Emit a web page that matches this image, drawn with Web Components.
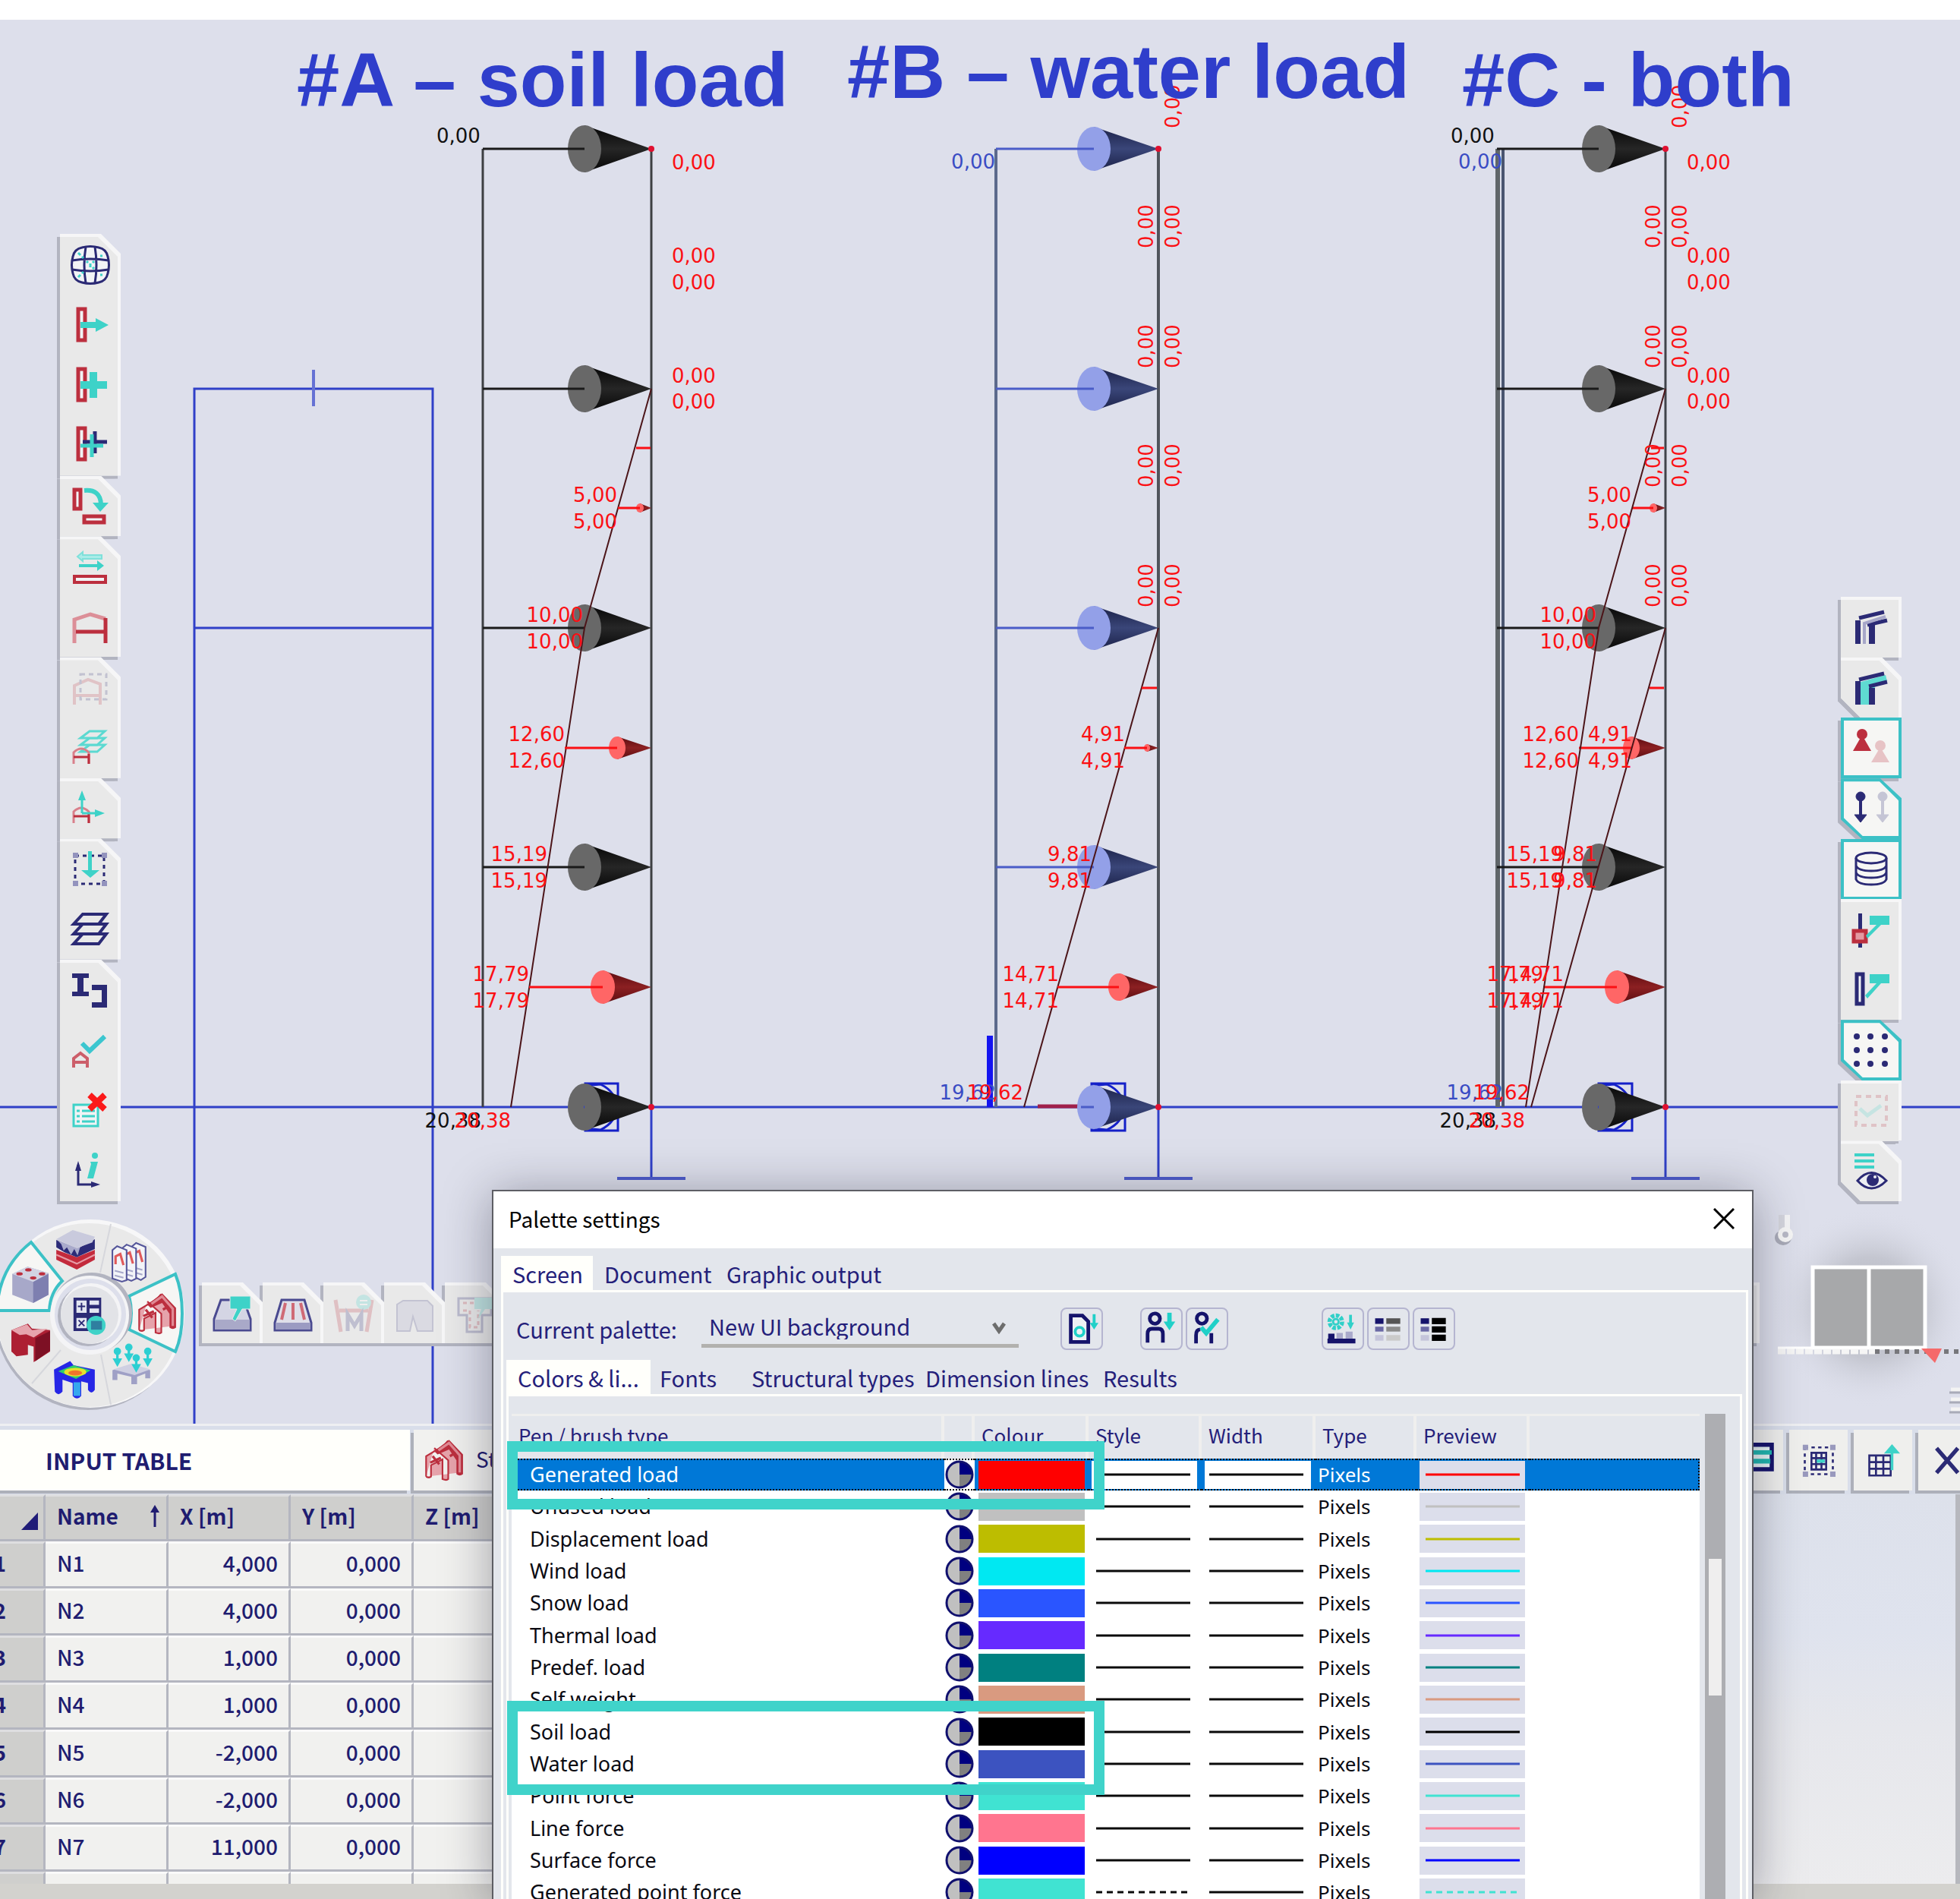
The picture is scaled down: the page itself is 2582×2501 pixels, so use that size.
<!DOCTYPE html>
<html lang="en">
<head>
<meta charset="utf-8">
<title>Palette settings</title>
<style>
html,body{margin:0;padding:0;height:100%;overflow:hidden}
body{font-family:"Noto Sans CJK SC","Open Sans",sans-serif;color:#201c70}
</style>
</head>
<body>
<app-shell></app-shell>
<script>
const N='#2b2a75',T='#3ed2c8',R='#bc2f3e';
const frameHouse=`<path d="M4 47V22L26 9 30 4 46 20V42M4 47q4 2 6 0V33l14-7v24q5 2 7 0V27L14 12" fill="#e6a3ab" stroke="${R}" stroke-width="2"/><path d="M14 16 32 2 49 20V44q-4 3-8 0V27L32 14 18 20Z" fill="${R}"/><path d="M19 15 32 6 45 21V42" fill="none" stroke="#e08a94" stroke-width="3"/><path d="M9 30 22 24M12 22l8 10M33 22l7-4" stroke="${R}" stroke-width="3"/>`;
const miniA=(x,y,c=R)=>`<path d="M${x} ${y+20}V${y+5}q10-10 20 0V${y+20}" fill="none" stroke="#d9808b" stroke-width="3"/><path d="M${x} ${y+11}h20m0-4v13" fill="none" stroke="${c}" stroke-width="3"/>`;
const sheets=(x,y,w,c,sw,dy)=>[0,1,2].map(i=>`<path d="M${x+12} ${y+i*dy}H${x+w}L${x+w-10} ${y+i*dy+dy}H${x}Z" fill="#e9e9e9" stroke="${c}" stroke-width="${sw}"/>`).reverse().join('');
const ICONS={
globe:`<path d="M14 2Q25-1 36 2 46 4 48 14 51 25 48 36 46 46 36 48 25 51 14 48 4 46 2 36-1 25 2 14 4 4 14 2Z" fill="#f2f3f6" stroke="${N}" stroke-width="3"/><path d="M19 1Q15 25 19 49M31 1Q35 25 31 49M1 19Q25 15 49 19M1 31Q25 35 49 31" fill="none" stroke="${N}" stroke-width="3"/><path d="M25 23v5M9 9l3 3m2 2 2 2M38 13h3M38 38h3M9 41l3-3m2-2 2-2M20 20l2 2m6 6 2 2m0-10-2 2" stroke="${T}" stroke-width="3"/>`,
move:`<path d="M9 4H18V45H9Z" fill="#f1f3f5" stroke="${R}" stroke-width="5"/><path d="M12 21H32V16L49 25 32 34V29H12Z" fill="${T}"/>`,
plus:`<path d="M9 4H18V45H9Z" fill="#f1f3f5" stroke="${R}" stroke-width="5"/><path d="M12 20H24V8H34V20H47V30H34V42H24V30H12Z" fill="${T}"/>`,
copy:`<path d="M9 4H18V45H9Z" fill="#f1f3f5" stroke="${R}" stroke-width="5"/><path d="M31 8V37M15 22H47" stroke="${N}" stroke-width="5"/><path d="M27 12V42M12 27H42" stroke="${T}" stroke-width="5"/>`,
rotate:`<path d="M4 3H12V28H4ZM17 38H43V46H17Z" fill="#f1f3f5" stroke="${R}" stroke-width="5"/><path d="M17 4Q38 2 39 22" fill="none" stroke="${T}" stroke-width="6"/><path d="M28 20H49L38 32Z" fill="${T}"/>`,
mirror:`<path d="M4 37H45V45H4Z" fill="#f1f3f5" stroke="${R}" stroke-width="4"/><path d="M8 11 15 5V9H40V14H15V17Z" fill="#a9ece8" stroke="#7fe0da" stroke-width="2"/><path d="M10 21H34V16L43 23 34 30V25H10Z" fill="${T}"/>`,
frame:`<path d="M4 47V16L25 9 45 15" fill="none" stroke="#dc8f98" stroke-width="5"/><path d="M6 32H45M45 14V47" fill="none" stroke="${R}" stroke-width="5"/>`,
frameSel:`<g opacity=".2"><path d="M4 47V22L22 14 38 20V47M6 35H38" fill="none" stroke="${R}" stroke-width="4"/><path d="M12 7H46V40H12Z" fill="none" stroke="${N}" stroke-width="3" stroke-dasharray="6 5"/></g>`,
planeA:sheets(12,4,32,'#5cd9d1',3,9)+miniA(3,27),
axisA:miniA(3,24)+`<path d="M14 31V12M14 31H34" stroke="${T}" stroke-width="3"/><path d="M14 1 9 14H19ZM44 31 31 26V36Z" fill="${T}"/>`,
dropSel:`<path d="M5 7H43V44H5Z" fill="none" stroke="${N}" stroke-width="3" stroke-dasharray="5 5"/><path d="M2 3h7v7H2ZM40 3h7v7h-7ZM2 40h7v7H2ZM40 40h7v7h-7Z" fill="#9393bd"/><path d="M22 1H27V26H37L25 36 13 26H22Z" fill="${T}"/>`,
layers:sheets(3,6,43,N,4,13),
ibeam:`<path d="M1 2H23V8H16V26H23V32H1V26H8V8H1Z" fill="${N}"/><path d="M27 17H47V47H27V40H40V24H27Z" fill="${N}"/>`,
checkA:`<path d="M3 48V36L12 29 21 36V48M3 41H21" fill="none" stroke="#cc5e6a" stroke-width="4"/><path d="M14 16 24 26 44 7" fill="none" stroke="#3cc6cf" stroke-width="6"/>`,
listX:`<path d="M3 18H35V46H3Z" fill="#f1f3f5" stroke="${T}" stroke-width="3"/><path d="M7 26h4m3 0h17M7 33h4m3 0h17M7 40h4m3 0h17" stroke="${T}" stroke-width="3"/><path d="M24 5 44 24M44 5 24 24" stroke="#fb1a1a" stroke-width="8"/>`,
axisI:`<path d="M9 18V44H32" fill="none" stroke="${N}" stroke-width="3"/><path d="M9 13 5 26H13ZM38 44 26 40V48Z" fill="${N}"/><path d="M25 14H35L29 36H21L26 17Z" fill="${T}"/><circle cx="31" cy="6" r="4" fill="${T}"/>`,
beams:`<path d="M4 47V16H11V47M22 47V20H30V47" fill="${N}"/><path d="M9 13 42 5M20 22 46 16" stroke="${N}" stroke-width="5"/><path d="M16 47V20L44 11" fill="none" stroke="#a7a7c9" stroke-width="4"/>`,
beamsFill:`<path d="M8 47V18L44 8 46 16 30 22V47" fill="#5fdad2"/><path d="M4 47V16H11V47M22 47V25H30V47" fill="${N}"/><path d="M9 14 42 6M22 23 46 17" stroke="${N}" stroke-width="5"/>`,
pawns:`<circle cx="13" cy="7" r="7" fill="${R}"/><path d="M13 8 25 29H1Z" fill="${R}"/><g opacity=".25"><circle cx="37" cy="22" r="7" fill="${R}"/><path d="M37 24 49 44H25Z" fill="${R}"/></g>`,
loads:`<g fill="${N}" stroke="${N}"><circle cx="11" cy="9" r="6"/><path d="M11 9V34" stroke-width="4"/><path d="M3 33H19L11 43Z"/></g><g fill="${N}" stroke="${N}" opacity=".24"><circle cx="40" cy="9" r="6"/><path d="M40 9V34" stroke-width="4"/><path d="M32 33H48L40 43Z"/></g>`,
stack:`<ellipse cx="25" cy="10" rx="20" ry="7" fill="#f7f7f5" stroke="${N}" stroke-width="3"/><path d="M5 10V38Q8 45 25 45T45 38V10M5 20Q8 27 25 27T45 20M5 29Q8 36 25 36T45 29" fill="none" stroke="${N}" stroke-width="3"/>`,
nodeTag:`<path d="M8 3h5v45H8Z" fill="${N}"/><path d="M2 26H18V40H2Z" fill="#e39aa2" stroke="${R}" stroke-width="5"/><path d="M23 6H49V18H38L20 36 18 32 32 18H23Z" fill="${T}"/>`,
barTag:`<path d="M6 6H14V45H6Z" fill="#f1f3f5" stroke="${N}" stroke-width="5"/><path d="M23 6H49V18H38L20 38 17 34 32 18H23Z" fill="${T}"/>`,
dots:[7,25,43].map(y=>[6,24,43].map(x=>`<circle cx="${x}" cy="${y}" r="4" fill="${N}"/>`).join('')).join(''),
checkBox:`<g opacity=".2"><path d="M5 6H45V44H5Z" fill="none" stroke="${R}" stroke-width="4" stroke-dasharray="7 6"/><path d="M10 22 20 31 38 18" fill="none" stroke="${T}" stroke-width="5"/></g>`,
eye:`<path d="M3 4H29M3 12H29M3 20H29" stroke="${T}" stroke-width="4"/><path d="M7 38Q25 17 45 38 25 58 7 38Z" fill="#eceef2" stroke="${N}" stroke-width="3"/><circle cx="27" cy="37" r="8" fill="${N}"/><circle cx="30" cy="33" r="2" fill="#eceef2"/>`,
slabTag:`<path d="M10 8H40L49 33V48H1V33Z" fill="#d4d5e4" stroke="#4a4a90" stroke-width="3"/><path d="M2 34H48V47H2Z" fill="#a9a9c8"/><path d="M22 3H49V20H38L29 36 25 33 31 20H22Z" fill="${T}" stroke="#e9e9e9"/>`,
slabLines:`<path d="M10 8H40L49 38V48H1V38Z" fill="#dfdfe9" stroke="#4a4a90" stroke-width="3"/><path d="M2 38H48V47H2Z" fill="#9b9bc2"/><path d="M15 12 10 34M25 12V34M35 12 40 34" stroke="#cf6a76" stroke-width="4"/>`,
mass:`<g opacity=".22"><path d="M1 8 8 50M49 8 42 50M6 22H44" fill="none" stroke="${R}" stroke-width="5"/><circle cx="38" cy="11" r="10" fill="${T}"/><path d="M33 9h10m-10 5h10" stroke="#fff" stroke-width="2"/><path d="M17 49V27L26 42 35 27V49" fill="none" stroke="${N}" stroke-width="5"/></g>`,
blockCut:`<path d="M2 14 10 9H42L49 16V49H29L23 30 19 49H2Z" fill="#dadae2" stroke="#c3c3d2" stroke-width="2"/>`,
colTag:`<g opacity=".24"><path d="M3 6H46V28H34V50H14V28H3Z" fill="none" stroke="${N}" stroke-width="3"/><path d="M9 12H40M9 22H18V44H29V22" fill="none" stroke="${R}" stroke-width="3" stroke-dasharray="5 4"/><path d="M24 5H50V20H38L28 34 33 20H24Z" fill="${T}"/></g>`,
house:frameHouse,
calc:`<path d="M4 2H42V30H30V48H4Z" fill="${N}"/><path d="M8 6H22V23H8ZM26 6H39V12H26ZM26 17H39V23H26ZM8 30H22V44H8Z" fill="#e3e6f2"/><path d="M15 9v11M10 14h10M11 33l8 8m0-8-8 8" stroke="${N}" stroke-width="2"/><circle cx="35" cy="40" r="13" fill="${T}"/><path d="M28 34H43V46H28Z" fill="#2f7fa0"/>`,
found:`<path d="M2 25V37L27 49 49 37V25L27 34Z" fill="#c32a3c"/><path d="M2 31 27 42 49 31" fill="none" stroke="#e79aa5" stroke-width="2"/><path d="M2 13V22L12 28 27 34 49 24V12L27 24Z" fill="#2c2b78"/><path d="M2 12 22 1 49 9 46 16 27 23Z" fill="#c9cadd"/><path d="M3 13 27 23 31 22 28 32 24 24 20 31 15 22 11 26 8 18Z" fill="#a9aacb"/>`,
docs:[26,14,2].map((x,i)=>`<path d="M${x} ${6+i*2}L${x+6} ${1+i*2} ${x+18} ${6+i*2}V${44+i*2}L${x+12} ${48+i}L${x} ${42+i*2}Z" fill="#f3f4f8" stroke="#55569a" stroke-width="2"/><path d="M${x+4} ${24+i*2}v-10l6-3 4 14" fill="none" stroke="#e05a5a" stroke-width="3"/><path d="M${x+3} ${32+i*2}l11 3m-11 3 11 3" stroke="#a7a8c9" stroke-width="2"/>`).join(''),
tableLoad:`<path d="M2 32 22 26 48 32V42H42V36L32 40V49H25V40L8 36V44H2Z" fill="#9fa0c6"/><path d="M3 31 25 24 48 31 29 38Z" fill="#cfd0e2"/><g fill="#2ccfd2" stroke="#2ccfd2"><path d="M8 6V20M22 1V14M31 15V27M45 6V20" stroke-width="3"/><circle cx="8" cy="9" r="4"/><circle cx="22" cy="4" r="4"/><circle cx="31" cy="17" r="4"/><circle cx="45" cy="9" r="4"/><path d="M3 18H13L8 27ZM17 12H27L22 21ZM26 25H36L31 34ZM40 18H50L45 27Z"/></g>`,
result:`<path d="M1 14 20 4 24 9 49 14V38Q45 44 41 38V30L33 28V45Q28 51 23 45V30L11 26V40Q6 46 2 40Z" fill="#2626e6"/><path d="M24 29h8V45H24Z" fill="#35a8ee"/><path d="M6 16 24 9 44 15 27 25Z" fill="#2fd06a"/><ellipse cx="26" cy="17" rx="13" ry="5" fill="#e8e02c"/><ellipse cx="26" cy="18" rx="8" ry="3" fill="#f0742c"/>`,
steel:`<path d="M2 12 10 14V41L2 36Z" fill="#8d1527"/><path d="M2 10 22 2 27 8 49 10V36L29 49V30L22 28V40L8 42 2 36Z" fill="#ad1f33"/><path d="M2 10 21 3 27 10 46 8 29 19 20 15 12 16Z" fill="#e6a4ad"/><path d="M31 20 49 11V35L31 48Z" fill="#7d1024"/>`,
cube:`<path d="M3 12 22 3 48 11V38L29 48 3 38Z" fill="#a7a8c9"/><path d="M3 12 22 3 48 11 29 22Z" fill="#d2d3e3"/><path d="M29 22 48 12V38L29 48Z" fill="#7e7fb0"/><g fill="${R}"><ellipse cx="23" cy="7" rx="4" ry="2"/><ellipse cx="12" cy="12" rx="4" ry="2"/><ellipse cx="40" cy="12" rx="4" ry="2"/><ellipse cx="29" cy="17" rx="4" ry="2"/></g>`,
doc:`<path d="M10 7H26L34 15V43H10Z" fill="#eef0f4" stroke="#15136b" stroke-width="5"/><circle cx="22" cy="29" r="6" fill="none" stroke="#20d0c8" stroke-width="4"/><path d="M42 5V20" stroke="#20d0c8" stroke-width="4"/><path d="M36 17H48L42 26Z" fill="#20d0c8"/>`,
userDown:`<circle cx="16" cy="11" r="7" fill="none" stroke="#15136b" stroke-width="5"/><path d="M6 44V32Q6 25 12 25H21Q27 25 27 32V44" fill="none" stroke="#15136b" stroke-width="5"/><path d="M36 3V18" stroke="#20d0c8" stroke-width="6"/><path d="M28 15H44L36 27Z" fill="#20d0c8"/>`,
userCheck:`<circle cx="18" cy="11" r="7" fill="none" stroke="#15136b" stroke-width="5"/><path d="M10 45V34Q10 26 16 26M31 45V31" fill="none" stroke="#15136b" stroke-width="5"/><path d="M17 23 24 31 40 12" fill="none" stroke="#20d0c8" stroke-width="6"/>`,
gearBars:`<circle cx="15" cy="15" r="9" fill="none" stroke="#30d0c8" stroke-width="6" stroke-dasharray="5 2"/><circle cx="15" cy="15" r="4" fill="none" stroke="#30d0c8" stroke-width="3"/><path d="M36 5V18" stroke="#30d0c8" stroke-width="4"/><path d="M31 16H41L36 26Z" fill="#30d0c8"/><path d="M4 32H13V40H4Z" fill="#15136b"/><path d="M16 31h9v9h-9ZM29 29h10v11H29Z" fill="#a9a9cb"/><path d="M3 39H43V46H3Z" fill="#15136b"/>`,
listGray:`<path d="M6 10H18V18H6Z" fill="#15136b"/><path d="M6 22H18V29H6Z" fill="#6a69a5"/><path d="M6 34H18V42H6Z" fill="#c4c4da"/><path d="M22 10H42V18H22Z" fill="#555"/><path d="M22 22H42V29H22Z" fill="#8b8b8b"/><path d="M22 34H42V42H22Z" fill="#cacaca"/>`,
listBlack:`<path d="M6 10H18V18H6Z" fill="#15136b"/><path d="M6 22H18V29H6Z" fill="#6a69a5"/><path d="M6 34H18V42H6Z" fill="#c4c4da"/><path d="M22 14H42M22 26H42M22 38H42" stroke="#000" stroke-width="9"/>`,
monitor:`<path d="M20 3H50V38H20Z" fill="#e8f5f5" stroke="#15136b" stroke-width="6"/><path d="M20 11H50V17H20ZM20 23H48V30H20Z" fill="#20b8b0"/>`,
gridSel:`<path d="M4 6H46V46H4Z" fill="none" stroke="${N}" stroke-width="3" stroke-dasharray="5 5"/><path d="M1 2h8v8H1ZM42 2h8v8h-8ZM1 42h8v8H1ZM42 42h8v8h-8Z" fill="#9999bd"/><path d="M14 14H36V39H14ZM21 14V39M29 14V39M14 22H36M14 31H36" fill="none" stroke="${N}" stroke-width="3"/><path d="M22 24h12v5H22Z" fill="${T}"/>`,
gridUp:`<path d="M4 18H36V48H4ZM14 18V48M25 18V48M4 28H36M4 38H36" fill="none" stroke="${N}" stroke-width="3"/><path d="M38 40V14" stroke="${T}" stroke-width="4"/><path d="M26 15H50L38 1Z" fill="${T}"/>`,
cross:`<path d="M8 7 40 44M40 7 8 44" stroke="${N}" stroke-width="6"/>`
};
const icon=(n,s=50)=>`<svg width="${s}" height="${s}" viewBox="0 0 50 50" aria-hidden="true">${ICONS[n]}</svg>`;
function define(name,render){
  customElements.define(name,class extends HTMLElement{
    constructor(){super();this.attachShadow({mode:'open'});}
    connectedCallback(){this.shadowRoot.innerHTML=render(this);}
  });
}

/* Structural model: columns, load cones, value labels */
function modelMarkup(){
  const o=[];
  const ln=(x1,y1,x2,y2,c,w=3)=>o.push(`<path d="M${x1} ${y1}L${x2} ${y2}" stroke="${c}" stroke-width="${w}"/>`);
  const tx=(s,x,y,c,end)=>o.push(`<text x="${x}" y="${y}" fill="${c}"${end?' text-anchor="end"':''}>${s}</text>`);
  const up=(x,y)=>o.push(`<text transform="translate(${x} ${y}) rotate(-90)" fill="${RED}">0,00</text>`);
  const cone=(x0,b,t,y,rx,ry,kind,lc)=>{
    o.push(`<path d="M${b} ${y-ry}L${t} ${y}L${b} ${y+ry}Z" fill="url(#${kind}Body)"/><ellipse cx="${b}" cy="${y}" rx="${rx}" ry="${ry}" fill="${{soil:'#686868',water:'#93a0e8',gen:'#ff6666'}[kind]}"/>`);
    ln(x0,y,b,y,lc);
  };
  const RED='#fb1014',BL='#3a4cc4',DK='#4c1519',BLUE='#3040c8';
  const Y=[196,512,827,1142,1458];
  ln(0,1458,2582,1458,BLUE,3);
  o.push(`<path d="M256 1875V512H570V1875M256 827H570" fill="none" stroke="${BLUE}" stroke-width="3"/>`);
  ln(413,487,413,535,'#6672d4',4);
  const support=(x)=>{ln(x,1458,x,1551,BLUE,3);ln(x-45,1552,x+45,1552,'#4e5ccc',4);};
  const ring=(x,w)=>o.push(`<rect x="${x}" y="1427" width="${w}" height="62" fill="none" stroke="#1420c8" stroke-width="3"/><path d="M${x} 1430L${x+20} 1428Q${x+w-2} 1438 ${x+w-2} 1458Q${x+w-2} 1478 ${x+20} 1488L${x} 1486" fill="none" stroke="#1420c8" stroke-width="3"/>`);
  /* soil */
  ln(636,196,636,1458,'#3d3f42',3);ln(858,196,858,1458,'#3d3f42',3);support(858);
  Y.slice(0,4).forEach(y=>cone(636,770,858,y,22,31,'soil','#1a1a1a'));
  ring(771,43);cone(769,770,858,1458,22,31,'soil','#3040c8');
  o.push(`<path d="M858 512L770 827L673 1458" fill="none" stroke="${DK}" stroke-width="2"/>`);
  ln(838,590,857,590,RED);
  cone(814,843,858,669,5,6,'gen',RED);cone(744,813,858,985,11,15,'gen',RED);cone(697,794,858,1300,16,22,'gen',RED);
  tx('0,00',575,188,'#111');
  [223,346,381,504,538].forEach(y=>tx('0,00',885,y,RED));
  const pairs=(s,x,y)=>{tx(s,x,y,RED,1);tx(s,x,y+35,RED,1);};
  pairs('5,00',813,661);pairs('10,00',768,819);pairs('12,60',744,976);pairs('15,19',721,1134);pairs('17,79',697,1292);
  tx('20,38',634,1485,'#111',1);tx('20,38',673,1485,RED,1);
  /* water */
  ln(1312,196,1312,1458,'#5c6a8c',4);ln(1526,196,1526,1458,'#50545c',4);support(1526);
  ln(1367,1457,1424,1457,'#a0204a',5);
  Y.slice(0,4).forEach(y=>cone(1312,1441,1526,y,22,29,'water','#4a5cc8'));
  ring(1438,44);cone(1424,1441,1526,1458,22,29,'water','#4a5cc8');
  o.push(`<path d="M1526 827L1349 1458" fill="none" stroke="${DK}" stroke-width="2"/>`);
  ln(1504,906,1524,906,RED);cone(1481,1511,1526,985,4,5,'gen',RED);cone(1393,1474,1526,1300,14,18,'gen',RED);
  ln(1304,1364,1304,1458,'#1414f0',8);
  tx('0,00',1311,222,BL,1);
  up(1554,169);[327,485,642,800].forEach(y=>{up(1519,y);up(1554,y);});
  pairs('4,91',1482,976);pairs('9,81',1438,1134);pairs('14,71',1395,1292);
  tx('19,62',1312,1448,BL,1);tx('19,62',1348,1448,RED,1);
  /* both */
  ln(1973,196,1973,1458,'#60666a',6);ln(1980,196,1980,1458,'#4a5570',4);ln(2194,196,2194,1458,'#3f434a',3);support(2194);
  Y.slice(0,4).forEach(y=>cone(1972,2106,2194,y,22,31,'soil','#1a1a1a'));
  ring(2106,44);cone(2105,2106,2194,1458,22,31,'soil','#3040c8');
  ln(2175,590,2192,590,RED);ln(2173,906,2192,906,RED);
  cone(2150,2178,2194,669,5,6,'gen',RED);cone(2080,2149,2194,985,11,15,'gen',RED);cone(2033,2130,2194,1300,16,22,'gen',RED);
  o.push(`<path d="M2194 512L2106 827L2010 1458M2194 827L2017 1458" fill="none" stroke="${DK}" stroke-width="2"/>`);
  tx('0,00',1911,188,'#111');tx('0,00',1979,222,BL,1);
  [223,346,381,504,538].forEach(y=>tx('0,00',2222,y,RED));
  up(2222,169);[327,485,642,800].forEach(y=>{up(2187,y);up(2222,y);});
  pairs('5,00',2149,661);pairs('10,00',2103,819);pairs('12,60',2080,976);pairs('4,91',2150,976);pairs('15,19',2059,1134);pairs('9,81',2104,1134);pairs('17,79',2033,1292);pairs('14,71',2060,1292);
  tx('19,62',1980,1448,BL,1);tx('19,62',2015,1448,RED,1);tx('20,38',1971,1485,'#111',1);tx('20,38',2009,1485,RED,1);
  [[858,196],[1526,196],[2194,196],[858,1458],[1526,1458],[2194,1458]].forEach(p=>o.push(`<circle cx="${p[0]}" cy="${p[1]}" r="4" fill="#e01030"/>`));
  return o.join('');
}
const grad=(id,a,b)=>`<linearGradient id="${id}Body" x1="0" y1="0" x2="0" y2="1"><stop offset="0" stop-color="${a}"/><stop offset=".5" stop-color="${b}"/><stop offset="1" stop-color="${a}"/></linearGradient>`;
define('model-canvas',()=>`<style>
:host{display:block;height:100%;background:#dddfeb}
svg{display:block;width:100%;height:100%}
text{font:26px "DejaVu Sans",sans-serif}
.cap text{font:bold 101px "Liberation Sans",Arial,sans-serif;fill:#2f3ecb}
</style><svg viewBox="0 26 2582 1849" preserveAspectRatio="xMidYMin slice" role="img" aria-label="Load model">
<defs>${grad('soil','#050505','#262626')}${grad('water','#1b2148','#3a4679')}${grad('gen','#5a0c10','#8c2022')}</defs>
${modelMarkup()}
<g class="cap"><text x="391" y="140">#A – soil load</text><text x="1116" y="129">#B – water load</text><text x="1926" y="140">#C - both</text></g></svg>`);

/* Floating tool strips */
define('tool-button',el=>`<style>
:host{display:flex;flex:1 1 80px;min-width:0;min-height:0}
button{flex:1;display:flex;align-items:center;justify-content:center;border:0;padding:0;background:none;margin:0}
svg{display:block;flex:none;overflow:visible}
.active{background:#3cc1c6}
.active span{flex:1;align-self:stretch;margin:4px;background:#f6f6f4;display:flex;align-items:center;justify-content:center}
.hex{clip-path:polygon(0 0,52px 0,100% 26px,100% 100%,28px 100%,0 54px)}
.hex span{clip-path:polygon(0 0,47px 0,100% 25px,100% 100%,25px 100%,0 48px)}
</style><button aria-label="${el.getAttribute('icon')||'tool'}" class="${el.hasAttribute('active')?'active':''} ${el.hasAttribute('hex')?'hex':''}"><span>${el.getAttribute('icon')?icon(el.getAttribute('icon')):''}</span></button>`);
define('tool-group',()=>`<style>
:host{display:flex;flex-direction:inherit;position:relative;background:#f6f6f7;
 clip-path:polygon(0 0,calc(100% - 26px) 0,100% 26px,100% 100%,0 100%)}
:host([plain]){clip-path:none}
div{display:flex;flex-direction:inherit;flex:1;background:#e9e9e9;margin:4px 4px 0 0;
 clip-path:polygon(0 0,calc(100% - 26px) 0,100% 26px,100% 100%,0 100%)}
:host([plain]) div{clip-path:none}
:host([bare]){background:none;clip-path:none}
:host([bare]) div{background:none;margin:0;clip-path:none}
:host([low]){clip-path:polygon(0 0,calc(100% - 26px) 0,100% 26px,100% 100%,26px 100%,0 calc(100% - 26px))}
::slotted(tool-button){margin:-4px 0 0 4px}
:host([bare]) ::slotted(tool-button){margin:0}
</style><div><slot></slot></div>`);
const group=(list,attrs='')=>`<tool-group ${attrs} style="flex:${list.length} 1 0">${list.map(b=>`<tool-button icon="${b}"></tool-button>`).join('')}</tool-group>`;
define('tool-strip',el=>{
  const k=el.getAttribute('kind');
  const body=k==='left'
   ?group(['globe','move','plus','copy'])+group(['rotate'])+group(['mirror','frame'])+group(['frameSel','planeA'])+group(['axisA'])+group(['dropSel','layers'])+group(['ibeam','checkA','listX','axisI'])
   :k==='right'
   ?group(['beams'],'plain')+group(['beamsFill'],'low')+`<tool-group bare style="flex:3 1 0"><tool-button icon="pawns" active></tool-button><tool-button icon="loads" active hex></tool-button><tool-button icon="stack" active></tool-button></tool-group>`+group(['nodeTag','barTag'],'plain')+`<tool-group bare style="flex:1 1 0"><tool-button icon="dots" active hex></tool-button></tool-group>`+group(['checkBox'],'plain')+group(['eye'],'low')
   :['slabTag','slabLines','mass','blockCut','colTag'].map(i=>`<tool-group style="flex:0 0 80px"><tool-button icon="${i}"></tool-button></tool-group>`).join('')+`<tool-group plain style="flex:1"></tool-group>`;
  return `<style>:host{display:flex;flex-direction:${k==='bottom'?'row':'column'};filter:drop-shadow(-4px 4px 0 #b2b4c0)}tool-group{min-height:0}</style>${body}`;
});

define('mode-wheel',()=>{
  const put=(n,x,y,s)=>`<svg x="${x}" y="${y}" width="${s}" height="${s}" viewBox="0 0 50 50">${ICONS[n]}</svg>`;
  return `<style>:host{display:block}svg{display:block;overflow:visible}</style>
<svg width="250" height="262" viewBox="0 1600 250 262" role="img" aria-label="Mode wheel">
<circle cx="116" cy="1734" r="123" fill="#b2b4c0"/><circle cx="119" cy="1730" r="124" fill="#f7f7f8"/><circle cx="117" cy="1732" r="121" fill="#e9e9e9"/>
<path d="M146 1612 132 1676M146 1850 133 1784M80 1778 42 1822" stroke="#d6d7dc" stroke-width="2"/>
<path d="M170 1707 231 1678Q240 1700 240 1730T231 1780L170 1751Q176 1730 170 1707Z" fill="#f6f6f4" stroke="#3cc1c6" stroke-width="4"/>
<path d="M-4 1726Q-2 1670 41 1636L82 1687Q66 1702 65 1726Z" fill="#f6f6f4" stroke="#3cc1c6" stroke-width="4"/>
<circle cx="121" cy="1729" r="53" fill="#b2b4c0"/><circle cx="118" cy="1732" r="52" fill="#f4f4f6"/><circle cx="119" cy="1731" r="47" fill="#dddfeb"/><circle cx="116" cy="1733" r="40" fill="#b2b4c0"/><circle cx="120" cy="1730" r="40" fill="#f4f4f6"/><circle cx="118" cy="1732" r="38" fill="#e2e3e7"/>
${put('calc',93,1707,48)}${put('found',72,1619,54)}${put('docs',146,1636,52)}${put('house',179,1701,54)}${put('tableLoad',146,1770,54)}${put('result',70,1788,56)}${put('steel',13,1741,54)}${put('cube',13,1665,53)}
</svg>`;});

define('nav-cube',()=>`<style>:host{display:block}svg{display:block}</style>
<svg width="272" height="310" viewBox="2310 1565 272 310" role="img" aria-label="View cube">
<defs><radialGradient id="h"><stop offset="0" stop-color="#b4b5bd"/><stop offset=".5" stop-color="#c4c6d0"/><stop offset="1" stop-color="#dddfeb" stop-opacity="0"/></radialGradient></defs>
<ellipse cx="2464" cy="1722" rx="132" ry="132" fill="url(#h)"/>
<ellipse cx="2349" cy="1630" rx="11" ry="10" fill="#a9abb8"/><path d="M2343 1600H2358V1624H2343Z" fill="#d4d5dd"/><path d="M2351 1600H2358V1624H2351Z" fill="#f4f4f6"/><circle cx="2352" cy="1626" r="7" fill="#b9bac6" stroke="#f6f6f6" stroke-width="6"/>
<path d="M2388 1669H2536V1775H2388ZM2462 1669V1775" fill="#a7a8aa" stroke="#fff" stroke-width="5"/>
<path d="M2342 1779H2470" stroke="#f5f5f5" stroke-width="9" stroke-dasharray="10 2"/><path d="M2470 1780H2582" stroke="#77777b" stroke-width="6" stroke-dasharray="6 7"/>
<path d="M2342 1775H2530" stroke="#fff" stroke-width="3"/><path d="M2531 1776H2558L2549 1795Z" fill="#f56a6a"/>
<path d="M2570 1830H2582M2570 1843H2582M2570 1856H2582" stroke="#f3f3f3" stroke-width="5"/><path d="M2568 1834H2582M2568 1847H2582M2568 1860H2582" stroke="#a9abb8" stroke-width="3"/></svg>`);

/* Node input table */
define('node-grid',()=>{
  const rows=[['1','N1','4,000'],['2','N2','4,000'],['3','N3','1,000'],['4','N4','1,000'],['5','N5','-2,000'],['6','N6','-2,000'],['7','N7','11,000'],['','','']];
  return `<style>
:host{display:block;overflow:hidden;background:#cfcfcd}
table{border-collapse:separate;border-spacing:0;table-layout:fixed;width:765px;margin-left:-60px;font-size:28px;line-height:36px}
th,td{box-sizing:border-box;height:62px;padding:0 0 6px;border-right:3px solid #b4b6c0;border-bottom:3px solid #b4b6c0;border-top:3px solid #fafafa;overflow:hidden;white-space:nowrap}
thead th{text-align:left;padding-left:15px;background:#cfcfcd;font-weight:700;border-top-color:#dedee0}
tbody th{text-align:right;padding-right:49px;background:#cfcfcd;font-weight:700;border-top-color:#dedee0}
td{background:#f1f1ef;text-align:right;padding-right:14px;font-weight:500}
td:nth-child(2){text-align:left;padding-left:15px}
thead th:first-child{text-align:right;padding-right:6px;vertical-align:bottom}
thead th:nth-child(2) div{display:flex;justify-content:space-between;padding-right:8px;align-items:center}
thead svg{display:inline-block}
tbody tr:nth-child(5n) >*{height:63px}
</style><table><colgroup><col style="width:120px"><col style="width:162px"><col style="width:161px"><col style="width:162px"><col style="width:160px"></colgroup>
<thead><tr><th><svg width="23" height="23" viewBox="0 0 23 23"><path d="M0 23H22V0Z" fill="#201c78"/></svg></th><th><div>Name<svg width="14" height="30" viewBox="0 0 14 30"><path d="M7 8V30" stroke="#201c70" stroke-width="3"/><path d="M1 11H13L7 1Z" fill="#201c70"/></svg></div></th><th>X [m]</th><th>Y [m]</th><th>Z [m]</th></tr></thead>
<tbody>${rows.map(r=>`<tr><th>${r[0]}</th><td>${r[1]}</td><td>${r[2]}</td><td>${r[1]?'0,000':''}</td><td></td></tr>`).join('')}</tbody></table>`;});

define('input-panel',()=>`<style>
:host{display:flex;flex-direction:column;height:626px;overflow:hidden;border-top:3px solid #eeeff2;box-sizing:border-box;background:#d9deea}
.top{display:flex;height:80px;margin-top:5px;flex:none}
.tab{box-sizing:border-box;display:flex;align-items:center;box-shadow:-4px 4px 0 #adb0ba;font-size:28px;line-height:36px}
h2{margin:0 5px 0 0;width:540px;padding-left:60px;background:#fffffb}
h2.tab{font-size:30px;font-weight:700}
.st{background:#f1f1ef;flex:1;gap:16px;padding:0 0 4px 12px}
nav{display:flex;gap:8px;margin:0 -22px 0 8px}
nav button{width:77px;border:0;padding:0;background:#efefed;box-shadow:-4px 4px 0 #adb0ba;display:flex;align-items:center;justify-content:center}
.main{flex:1;display:flex;margin-top:5px;min-height:0}
node-grid{width:705px}
.pane{flex:1;background:linear-gradient(#dde1eb,#dfe3ee 35%,#e6e7ec 60%,#ececee);border-right:6px solid #b7b8be}
footer{height:20px;background:#d3d2ce;flex:none}
svg{display:block;overflow:visible}
</style><div class="top"><h2 class="tab">INPUT TABLE</h2><div class="tab st">${icon('house',54)}<span>Structure</span></div>
<nav><button aria-label="Display">${icon('monitor',46)}</button><button aria-label="Select grid">${icon('gridSel',44)}</button><button aria-label="Export grid">${icon('gridUp',44)}</button><button aria-label="Close panel">${icon('cross',44)}</button></nav></div>
<div class="main"><node-grid></node-grid><div class="pane"></div></div><footer></footer>`);

/* Pen list */
define('pen-table',()=>{
  const pens=[['Generated load','#ff0000'],['Unused load','#c0c0c0'],['Displacement load','#bdbd00'],['Wind load','#00e8f2'],['Snow load','#2a55ff'],['Thermal load','#662aff'],['Predef. load','#008080'],['Self weight','#d99a80'],['Soil load','#000000'],['Water load','#3c53c0'],['Point force','#40e3d2'],['Line force','#ff758f'],['Surface force','#0000ff'],['Generated point force','#40e3d2',1]];
  const line=(c,d)=>`<svg width="124" height="4" viewBox="0 0 124 4"><path d="M0 2H124" stroke="${c}" stroke-width="3"${d?' stroke-dasharray="8 6"':''}/></svg>`;
  const pie=`<svg width="40" height="38" viewBox="0 0 40 38"><circle cx="20" cy="19" r="17" fill="#c0c0c0"/><path d="M20 19V2A17 17 0 0 1 37 19Z" fill="#000080"/><path d="M20 19H37A17 17 0 0 1 20 36Z" fill="#808080"/><circle cx="20" cy="19" r="17" fill="none" stroke="#10106e" stroke-width="3"/></svg>`;
  return `<style>
:host{display:flex;gap:7px;overflow:hidden}
.wrap{flex:1;background:#fff;min-width:0}
table{width:100%;table-layout:fixed;border-collapse:separate;border-spacing:0;color:#0a0a12;font-size:27px;line-height:36px}
th{box-sizing:border-box;height:59px;padding:0 0 7px 9px;text-align:left;font-weight:400;font-size:26px;background:#e3e6ec;color:#24207a;border-right:4px solid #efefee;border-top:3px solid #efefee;white-space:nowrap}
th:last-child{border-right:0}
td{box-sizing:border-box;height:42px;padding:0;white-space:nowrap;overflow:hidden;font-family:"Noto Sans","Open Sans",sans-serif}
tr:nth-child(3n) td{height:43px}
td:first-child{padding-left:24px}
td:nth-child(6){padding-left:3px;font-size:26px}
svg{display:block}
.c{width:140px;height:37px;margin-left:5px}
.w{margin:0 6px 0 4px;padding-left:6px;height:37px;display:flex;align-items:center;background:#fff}
.p{margin-left:4px;width:139px;height:37px;background:#dcdeeb;display:flex;align-items:center;justify-content:center}
.sel td{background:#0078d7;color:#fff;border-top:2px dotted #000;border-bottom:2px dotted #000}
.sel td:last-child{border-right:2px dotted #000}
.sel td:nth-child(2){background:#fff}
.bar{width:27px;background:#adaeb2;box-sizing:border-box;padding:191px 5px 0}
.bar div{height:180px;background:#efeeee}
</style><div class="wrap"><table><colgroup><col style="width:570px"><col style="width:40px"><col style="width:150px"><col style="width:149px"><col style="width:150px"><col style="width:133px"><col style="width:149px"><col></colgroup>
<thead><tr><th>Pen / brush type</th><th></th><th>Colour</th><th>Style</th><th>Width</th><th>Type</th><th>Preview</th><th></th></tr></thead>
<tbody>${pens.map((p,i)=>`<tr class="${i?'':'sel'}"><td>${p[0]}</td><td>${pie}</td><td><div class="c" style="background:${p[1]}"></div></td><td><div class="w">${line('#0a0a0a',p[2])}</div></td><td><div class="w">${line('#0a0a0a')}</div></td><td>Pixels</td><td><div class="p">${line(p[1],p[2])}</div></td><td></td></tr>`).join('')}</tbody></table></div><div class="bar"><div></div></div>`;});

define('palette-dialog',()=>`<style>
:host{display:flex;flex-direction:column;box-sizing:border-box;border:2px solid #5d5e64;border-bottom:0;background:#e3e6ec;box-shadow:0 6px 60px rgba(20,20,40,.38);font-size:29px;line-height:36px;color:#24207a;overflow:hidden}
header{height:75px;box-sizing:border-box;flex:none;background:#fff;color:#000;display:flex;align-items:center;justify-content:space-between;padding:0 23px 4px 20px}
h1{margin:0;font-size:28px;font-weight:400}
button{font:inherit;color:inherit;background:none;border:0;padding:0;margin:0;white-space:nowrap}
header button{display:flex}
svg{display:block}
.tabs{display:grid;height:45px;flex:none}
.tabs button{text-align:left}
.tabs .on{background:#fffffb}
.t1{grid-template-columns:121px 161px auto 1fr;margin:10px 0 0 10px}
.t1 button{padding-left:15px}
.t2{grid-template-columns:190px 121px 229px 234px auto 1fr;margin:13px 0 0 4px}
.t2 button{padding-left:12px}.t2 .on{padding-left:15px}
.page{flex:1;display:flex;flex-direction:column;min-height:0;border:3px solid #fffffb;border-bottom:0}
.p1{margin:0 5px 0 10px}
.p2{margin:0 5px 0 4px}
.row{display:flex;align-items:center;margin:20px 0 0 17px;height:56px;flex:none}
label{width:244px}
.combo{position:relative;width:418px;height:50px;border-bottom:5px solid #b2b1ae;box-sizing:border-box}
select{appearance:none;font:inherit;color:inherit;border:0;background:none;width:100%;height:42px;padding:0 0 0 10px;margin:0}
.combo svg{position:absolute;right:17px;top:16px}
.btns{display:flex;gap:4px}
.btns button{width:56px;height:56px;box-sizing:border-box;border:2px solid #b5b5d0;border-radius:8px;display:flex;align-items:center;justify-content:center}
.b1{margin-left:55px}.b2{margin-left:49px}.b3{margin-left:123px}
pen-table{margin:23px 19px 0 4px;flex:1;min-height:0}
</style>
<header><h1>Palette settings</h1><button aria-label="Close"><svg width="28" height="28" viewBox="0 0 28 28"><path d="M1 1 27 27M27 1 1 27" stroke="#000" stroke-width="3"/></svg></button></header>
<div class="tabs t1" role="tablist"><button role="tab" class="on">Screen</button><button role="tab">Document</button><button role="tab">Graphic output</button></div>
<div class="page p1">
<div class="row"><label for="pal">Current palette:</label><div class="combo"><select id="pal"><option>New UI background</option></select><svg width="18" height="16" viewBox="0 0 18 16"><path d="M2 2 9 12 16 2" fill="none" stroke="#6d6d6d" stroke-width="5"/></svg></div>
<div class="btns b1"><button aria-label="Load document palette">${icon('doc',48)}</button></div><div class="btns b2"><button aria-label="Load user palette">${icon('userDown',48)}</button><button aria-label="Save user palette">${icon('userCheck',48)}</button></div><div class="btns b3"><button aria-label="Setup">${icon('gearBars',46)}</button><button aria-label="Greyscale">${icon('listGray',46)}</button><button aria-label="Black">${icon('listBlack',46)}</button></div></div>
<div class="tabs t2" role="tablist"><button role="tab" class="on">Colors &amp; li...</button><button role="tab">Fonts</button><button role="tab">Structural types</button><button role="tab">Dimension lines</button><button role="tab">Results</button></div>
<div class="page p2"><pen-table></pen-table></div></div>`);

define('highlight-box',()=>`<style>:host{display:block;box-sizing:border-box;border:14px solid #40d3ca;pointer-events:none}</style>`);

define('app-shell',()=>`<style>
:host{display:flex;flex-direction:column;height:100vh;position:relative;overflow:hidden;background:#fff;padding-top:26px;box-sizing:border-box}
main{flex:1;min-height:0;position:relative;overflow:hidden}
input-panel{flex:none}
.left{position:absolute;left:79px;top:282px;width:80px;height:1274px}
.right{position:absolute;right:77px;top:760px;width:80px;height:796px}
.bottom{position:absolute;left:266px;right:264px;top:1663px;height:80px}
mode-wheel{position:absolute;left:0;top:1574px}
nav-cube{position:absolute;right:0;top:1539px}
palette-dialog{position:absolute;left:648px;right:272px;top:1567px;bottom:0}
highlight-box{position:absolute;left:668px;width:787px}
.h1{top:1898px;height:90px}.h2{top:2240px;height:124px}
</style><main><model-canvas></model-canvas><tool-strip class="left" kind="left"></tool-strip><tool-strip class="right" kind="right"></tool-strip><tool-strip class="bottom" kind="bottom"></tool-strip><mode-wheel></mode-wheel><nav-cube></nav-cube></main>
<input-panel></input-panel><palette-dialog></palette-dialog><highlight-box class="h1"></highlight-box><highlight-box class="h2"></highlight-box>`);
</script>
</body>
</html>
